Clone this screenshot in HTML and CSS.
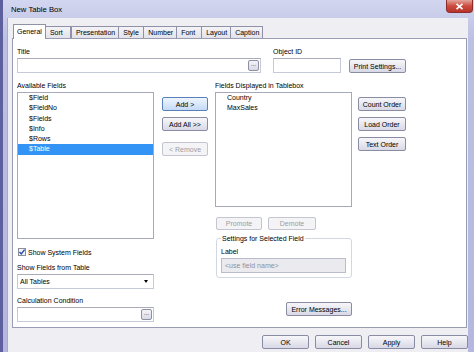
FILE: index.html
```html
<!DOCTYPE html>
<html lang="en">
<head>
  <meta charset="UTF-8" />
  <title>New Table Box</title>
  <link rel="stylesheet" href="styles.css">
</head>
<body>
  <div class="window">
    <div class="titlebar">
      <span class="title">New Table Box</span>
      <div class="close">
        <svg width="9" height="7" viewBox="0 0 9 7"><path d="M1.5 0.8 L7.5 6.2 M7.5 0.8 L1.5 6.2" stroke="#fff" stroke-width="1.6"/></svg>
      </div>
    </div>

    <div class="client">
      <div class="tabs">
        <span class="tab active">General</span>
        <span class="tab">Sort</span>
        <span class="tab">Presentation</span>
        <span class="tab">Style</span>
        <span class="tab">Number</span>
        <span class="tab">Font</span>
        <span class="tab">Layout</span>
        <span class="tab">Caption</span>
      </div>

      <div class="panel">
        <div class="top-row">
          <div class="field title-field">
            <label>Title</label>
            <div class="input"><span class="dots">...</span></div>
          </div>
          <div class="field id-field">
            <label>Object ID</label>
            <div class="input"></div>
          </div>
          <button class="btn print-btn">Print Settings...</button>
        </div>

        <div class="main">
          <div class="col-left">
            <label>Available Fields</label>
            <div class="list fields-list">
              <div class="item">$Field</div>
              <div class="item">$FieldNo</div>
              <div class="item">$Fields</div>
              <div class="item">$Info</div>
              <div class="item">$Rows</div>
              <div class="item selected">$Table</div>
            </div>
            <div class="check-row">
              <span class="checkbox">
                <svg width="8" height="8" viewBox="0 0 8 8"><path d="M1.5 4 L3.3 6 L6.6 1.6" fill="none" stroke="#2a4fa8" stroke-width="1.4"/></svg>
              </span>
              <span>Show System Fields</span>
            </div>
            <label class="gap-label">Show Fields from Table</label>
            <div class="input select">
              <span>All Tables</span>
              <span class="arrow"></span>
            </div>
            <label class="gap-label">Calculation Condition</label>
            <div class="input"><span class="dots">...</span></div>
          </div>

          <div class="col-mid">
            <button class="btn default">Add &gt;</button>
            <button class="btn">Add All &gt;&gt;</button>
            <button class="btn disabled remove-btn">&lt; Remove</button>
          </div>

          <div class="col-right">
            <label>Fields Displayed in Tablebox</label>
            <div class="list shown-list">
              <div class="item">Country</div>
              <div class="item">MaxSales</div>
            </div>
            <div class="move-row">
              <button class="btn disabled promote">Promote</button>
              <button class="btn disabled demote">Demote</button>
            </div>
            <fieldset class="group">
              <legend>Settings for Selected Field</legend>
              <label>Label</label>
              <div class="input greyed">&lt;use field name&gt;</div>
            </fieldset>
            <button class="btn error-btn">Error Messages...</button>
          </div>

          <div class="col-order">
            <button class="btn">Count Order</button>
            <button class="btn">Load Order</button>
            <button class="btn">Text Order</button>
          </div>
        </div>
      </div>

      <div class="footer">
        <button class="btn">OK</button>
        <button class="btn">Cancel</button>
        <button class="btn">Apply</button>
        <button class="btn">Help</button>
      </div>
    </div>
  </div>
</body>
</html>
```

FILE: styles.css
```css
* {
  box-sizing: border-box;
}
html, body {
  margin: 0;
  padding: 0;
  width: 474px;
  height: 352px;
  overflow: hidden;
  font-family: 'Liberation Sans', Arial, sans-serif;
  font-size: 7px;
  line-height: 9px;
  color: #000;
}
.window {
  width: 474px;
  height: 352px;
  display: flex;
  flex-direction: column;
  background: linear-gradient(#d3d6ef, #bcc0e2 40px, #b4b8de);
  border-left: 3px solid #5d609c;
  padding: 0 6px 0 4px;
}
.titlebar {
  height: 18px;
  display: flex;
  align-items: flex-start;
  position: relative;
}
.title {
  font-size: 7.7px;
  line-height: 10px;
  margin: 5px 0 0 4px;
}
.close {
  position: absolute;
  top: 0;
  right: -5px;
  width: 27px;
  height: 13px;
  border: 1px solid #8a2c2c;
  border-top: none;
  border-radius: 0 0 4px 4px;
  background: linear-gradient(#e3a49c, #cc4b3e 50%, #b8322a);
  display: flex;
  align-items: center;
  justify-content: center;
}
.client {
  flex: 1;
  background: #efeff3;
  border-left: 1px solid #a7aacb;
  display: flex;
  flex-direction: column;
}

/* tabs */
.tabs {
  display: flex;
  align-items: flex-end;
  margin: 6px 0 0 5px;
  height: 14px;
}
.tab {
  height: 12px;
  line-height: 11px;
  padding: 0 3px 0 4px;
  min-width: 26px;
  border: 1px solid #8f92a6;
  border-bottom: none;
  margin-right: -1px;
  background: linear-gradient(#f4f4f7, #e2e3ea);
  white-space: nowrap;
}
.tab:nth-child(3) { margin-left: 1px; }
.tab.active {
  height: 15px;
  margin-bottom: -1px;
  background: #fff;
  padding: 0 3px;
  position: relative;
  z-index: 1;
  line-height: 13px;
}

/* panel */
.panel {
  margin-left: 4px;
  width: 455px;
  height: 290px;
  background: #fff;
  border: 1px solid #9a9cb3;
  padding: 8px 0 0 4px;
}
label {
  display: block;
  height: 9px;
  margin-bottom: 2px;
  white-space: nowrap;
}
.input {
  height: 15px;
  border: 1px solid #c6c9d6;
  border-top-color: #a9acb8;
  background: #fff;
  display: flex;
  align-items: center;
  justify-content: flex-end;
  padding: 0 1px;
}
.dots {
  width: 11px;
  height: 11px;
  border: 1px solid #8d8fa3;
  border-radius: 2px;
  background: linear-gradient(#f3f3f7, #d8d9e5);
  font-size: 6px;
  line-height: 7px;
  text-align: center;
}
.top-row {
  display: flex;
  align-items: flex-end;
}
.title-field {
  width: 244px;
  margin-right: 12px;
}
.id-field {
  width: 68px;
  margin-right: 8px;
}
.btn {
  font: inherit;
  color: #000;
  height: 14px;
  padding: 0;
  border: 1px solid #8a8ca3;
  border-radius: 2px;
  background: linear-gradient(#f6f6fa, #e8e8f0 50%, #d8d9e6);
  white-space: nowrap;
  line-height: 11px;
}
.btn.default {
  border-color: #5b7fb8;
  background: linear-gradient(#eef5fd, #d9e8fa 50%, #c5daf5);
}
.btn.disabled {
  color: #9b9ca6;
  border-color: #c3c5d0;
  background: #f4f4f6;
}
.print-btn {
  width: 57px;
  margin-bottom: 0;
}

.main {
  display: flex;
  margin-top: 8px;
}
.col-left {
  width: 137px;
  display: flex;
  flex-direction: column;
}
.list {
  border: 1px solid #a6a9bb;
  background: #fff;
  padding-top: 0;
}
.fields-list {
  height: 147px;
}
.shown-list {
  height: 115px;
}
.item {
  height: 10.3px;
  line-height: 10.3px;
  padding-left: 11px;
}
.item.selected {
  background: #3494f5;
  color: #fff;
}
.check-row {
  display: flex;
  align-items: center;
  height: 8px;
  margin-top: 9px;
  padding-left: 1px;
}
.checkbox {
  width: 8px;
  height: 8px;
  border: 1px solid #8b8e9c;
  background: #f2f3f8;
  margin-right: 2px;
  display: flex;
}
.checkbox svg {
  margin: -1px;
}
.gap-label {
  margin-top: 7px;
}
.select {
  justify-content: space-between;
  padding: 0 5px 0 2px;
}
.arrow {
  width: 0;
  height: 0;
  border-left: 2.5px solid transparent;
  border-right: 2.5px solid transparent;
  border-top: 3px solid #000;
}
.col-mid {
  width: 46px;
  margin-left: 8px;
  padding-top: 16px;
  display: flex;
  flex-direction: column;
  gap: 6px;
}
.remove-btn {
  margin-top: 5px;
}
.col-right {
  width: 137px;
  margin-left: 7px;
  display: flex;
  flex-direction: column;
}
.move-row {
  display: flex;
  margin-top: 10px;
  padding-left: 1px;
  gap: 6px;
}
.promote {
  width: 46px;
  height: 13px;
}
.demote {
  width: 48px;
  height: 13px;
}
.group {
  margin: 4px 0 0 1px;
  padding: 0 4px 4px 4px;
  border: 1px solid #d3d7e3;
  border-radius: 3px;
  min-width: 0;
}
.group legend {
  padding: 0 1px;
  line-height: 9px;
}
.group label {
  margin-top: 4px;
}
.input.greyed {
  width: 125px;
  justify-content: flex-start;
  background: #ebebef;
  border-color: #b9bccb;
  color: #8e90a0;
  padding-left: 3px;
}
.error-btn {
  width: 66px;
  align-self: flex-end;
  margin-top: 24px;
}
.col-order {
  width: 48px;
  margin-left: 6px;
  padding-top: 16px;
  display: flex;
  flex-direction: column;
  gap: 6px;
}

.footer {
  display: flex;
  justify-content: flex-end;
  gap: 6px;
  margin-top: 7px;
  padding-right: 0;
}
.footer .btn {
  width: 47px;
  height: 14px;
}
```
